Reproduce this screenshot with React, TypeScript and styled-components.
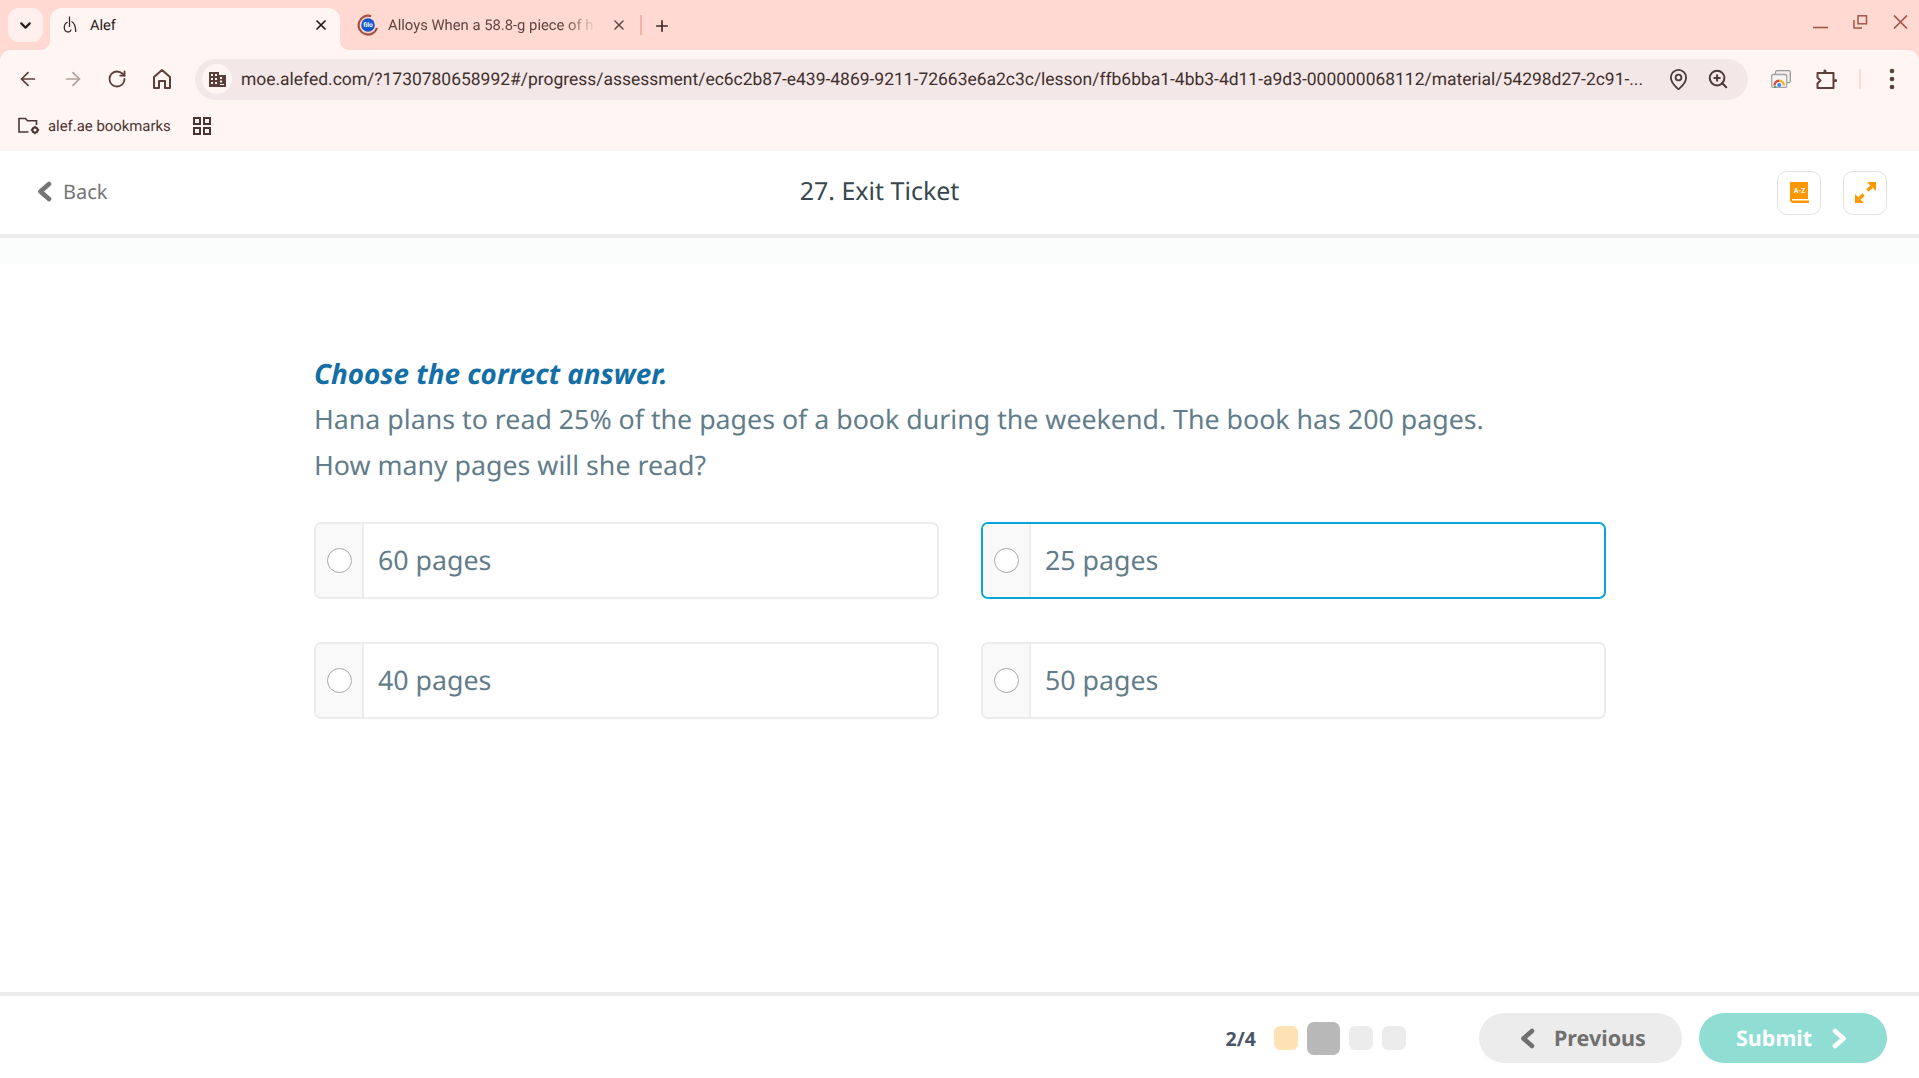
import styled, { createGlobalStyle } from 'styled-components'
import { ArrowLeft, ArrowRight, ChevronDown, MapPin, Plus, RotateCw, X, ZoomIn } from 'lucide-react'

const GlobalStyle = createGlobalStyle`
  html, body { margin: 0; padding: 0; height: 100%; background: #fff; overflow: hidden; }
  body { font-family: 'Roboto', 'Liberation Sans', sans-serif; text-rendering: geometricPrecision; }
  #root { height: 100%; }
`

const Page = styled.div`
  display: flex;
  flex-direction: column;
  width: 1919px;
  height: 1078px;
`

const TabStrip = styled.div`
  display: flex;
  align-items: flex-end;
  height: 50px;
  padding-left: 8px;
  background: #ffd9d2;
  flex: none;
`

const TabMenu = styled.div`
  display: flex;
  align-items: center;
  justify-content: center;
  align-self: flex-start;
  width: 35px;
  height: 34px;
  margin: 8px 7px 0 0;
  border-radius: 11px;
  background: #fff0ed;
  color: #2b1a17;
`

const ActiveTab = styled.div`
  position: relative;
  display: flex;
  align-items: center;
  width: 290px;
  height: 42px;
  padding: 0 11px 8px 13px;
  box-sizing: border-box;
  border-radius: 12px 12px 0 0;
  background: #fff5f3;
  color: #291714;
  font-size: 14.6px;

  &::before,
  &::after {
    content: '';
    position: absolute;
    bottom: 0;
    width: 10px;
    height: 10px;
  }
  &::before {
    left: -10px;
    background: radial-gradient(circle at 0 0, transparent 10px, #fff5f3 10.5px);
  }
  &::after {
    right: -10px;
    background: radial-gradient(circle at 100% 0, transparent 10px, #fff5f3 10.5px);
  }
`

const OtherTab = styled.div`
  display: flex;
  align-items: center;
  width: 298px;
  height: 42px;
  padding: 0 11px 8px 17px;
  box-sizing: border-box;
  color: #5c4742;
  font-size: 14.8px;
`

const TabTitle = styled.span`
  flex: 1;
  margin-left: 13px;
  overflow: hidden;
  white-space: nowrap;
`

const OtherTabTitle = styled(TabTitle)`
  margin-left: 9px;
  -webkit-mask-image: linear-gradient(90deg, #000 85%, transparent);
  mask-image: linear-gradient(90deg, #000 85%, transparent);
`

const OtherTabClose = styled(X)`
  margin-left: 15px;
  flex: none;
`

const TabDivider = styled.div`
  width: 2px;
  height: 20px;
  margin: 0 0 15px 2px;
  background: #f5b3a8;
`

const NewTab = styled.div`
  display: flex;
  margin: 0 0 15px 11px;
  color: #3b2a27;
`

const WindowControls = styled.div`
  display: flex;
  gap: 25px;
  align-self: flex-start;
  margin: 15px 11px 0 auto;
  color: #a3574a;
`

const ToolbarBackdrop = styled.div`
  background: #ffd9d2;
  flex: none;
`

const Toolbar = styled.div`
  display: flex;
  align-items: center;
  height: 58px;
  padding: 0 0 0 16px;
  box-sizing: border-box;
  background: #fff5f3;
  border-radius: 11px 11px 0 0;
`

const NavIcon = styled.div<{ $muted?: boolean }>`
  display: flex;
  justify-content: center;
  width: 24px;
  margin-right: 20.5px;
  color: ${p => (p.$muted ? '#b3a09c' : '#5b3f39')};
`

const Omnibox = styled.div`
  display: flex;
  align-items: center;
  width: 1553px;
  height: 41px;
  margin-left: 1px;
  padding: 0 19px 0 7px;
  box-sizing: border-box;
  border-radius: 21px;
  background: #f3e7e7;
  color: #3f2f2c;
  font-size: 17.47px;
`

const SiteChip = styled.div`
  display: flex;
  align-items: center;
  justify-content: center;
  width: 30px;
  height: 30px;
  margin-right: 9px;
  border-radius: 50%;
  background: #fff5f3;
  color: #5b3f39;
  flex: none;
`

const UrlText = styled.span`
  flex: 1;
  padding-top: 2px;
  white-space: nowrap;
  overflow: hidden;
`

const OmniIcons = styled.div`
  display: flex;
  align-items: center;
  gap: 17px;
  margin-left: 20px;
  color: #4b3c39;
`

const ToolbarRight = styled.div`
  display: flex;
  align-items: center;
  margin-left: 23px;
  color: #5b3f39;
`

const ExtensionSlot = styled.div`
  display: flex;
  margin-left: 25px;
`

const ToolbarDivider = styled.div`
  width: 2px;
  height: 20px;
  margin: 0 28px 0 21px;
  background: #ffd9d2;
`

const BookmarksBar = styled.div`
  display: flex;
  align-items: center;
  height: 43px;
  padding: 0 0 8px 18px;
  box-sizing: border-box;
  background: #fff5f3;
  color: #4b3431;
  font-size: 14.9px;
  flex: none;
`

const BookmarkLabel = styled.span`
  margin: 0 22px 0 8px;
`

const AppHeader = styled.header`
  position: relative;
  display: flex;
  align-items: center;
  justify-content: space-between;
  height: 87px;
  padding: 0 32px 0 37px;
  box-sizing: border-box;
  border-bottom: 4px solid #ececec;
  flex: none;
`

const BackLink = styled.div`
  display: flex;
  align-items: center;
  gap: 11px;
  margin-bottom: 2px;
  color: #757575;
  font-family: 'Noto Sans', sans-serif;
  font-size: 20px;
`

const PageTitle = styled.h1`
  position: absolute;
  left: 0;
  right: 160px;
  margin: 0 0 3px;
  text-align: center;
  color: #37474f;
  font-family: 'Noto Sans', sans-serif;
  font-size: 25px;
  font-weight: 400;
`

const HeaderActions = styled.div`
  display: flex;
  gap: 22px;
`

const IconButton = styled.div`
  display: flex;
  align-items: center;
  justify-content: center;
  width: 44px;
  height: 44px;
  box-sizing: border-box;
  border: 1px solid #e2e2e2;
  border-radius: 10px;
`

const Content = styled.main`
  flex: 1;
  padding: 118px 0 0 314px;
  box-sizing: border-box;
  background: linear-gradient(#fbfdfc 26px, #fff 26px);
  font-family: 'Noto Sans', sans-serif;
`

const Prompt = styled.div`
  color: #136fa5;
  font-size: 27.8px;
  font-style: italic;
  font-weight: 700;
  line-height: 36px;
`

const Question = styled.p`
  margin: 4px 0 34px;
  color: #627d8a;
  font-size: 26.75px;
  line-height: 46px;
`

const Options = styled.div`
  display: grid;
  grid-template-columns: 625px 625px;
  gap: 43px 42px;
`

const Option = styled.div<{ $selected?: boolean }>`
  display: flex;
  height: 77px;
  box-sizing: border-box;
  border: 2px solid ${p => (p.$selected ? '#0aa5d8' : '#ececec')};
  border-radius: 7px;
  overflow: hidden;
`

const RadioCell = styled.div`
  display: flex;
  align-items: center;
  justify-content: center;
  width: 46px;
  border-right: 2px solid #ececec;
  background: #f9f9f9;
  flex: none;
`

const Radio = styled.div`
  width: 25px;
  height: 25px;
  box-sizing: border-box;
  border: 1px solid #a9a9a9;
  border-radius: 50%;
  background: #fff;
`

const OptionLabel = styled.div`
  display: flex;
  align-items: center;
  padding: 0 0 2px 14px;
  color: #627d8a;
  font-size: 26.75px;
`

const Footer = styled.footer`
  display: flex;
  align-items: center;
  justify-content: flex-end;
  height: 86px;
  padding: 2px 32px 0 0;
  box-sizing: border-box;
  border-top: 4px solid #ececec;
  font-family: 'Noto Sans', sans-serif;
  flex: none;
`

const PageCount = styled.span`
  margin-right: 18px;
  color: #4a5568;
  font-size: 19.5px;
  font-weight: 700;
`

const Dots = styled.div`
  display: flex;
  align-items: center;
  gap: 9px;
  margin-right: 73px;
`

const Dot = styled.div<{ $color: string; $big?: boolean }>`
  width: ${p => (p.$big ? '33px' : '24px')};
  height: ${p => (p.$big ? '33px' : '24px')};
  border-radius: ${p => (p.$big ? '7px' : '6px')};
  background: ${p => p.$color};
`

const PillButton = styled.div<{ $submit?: boolean }>`
  display: flex;
  align-items: center;
  gap: ${p => (p.$submit ? '20px' : '19px')};
  width: ${p => (p.$submit ? '188px' : '203px')};
  height: 50px;
  margin-left: ${p => (p.$submit ? '17px' : '0')};
  padding-left: ${p => (p.$submit ? '37px' : '41px')};
  box-sizing: border-box;
  border-radius: 25px;
  background: ${p => (p.$submit ? '#90ddd3' : '#ececec')};
  color: ${p => (p.$submit ? '#fff' : '#707070')};
  font-size: 21.5px;
  font-weight: 700;
`

function AlefFavicon() {
  return (
    <svg width="14" height="18" viewBox="0 0 14 18" fill="none" stroke="#3b2a27" strokeWidth="1.3">
      <path d="M6.5 0.5v10.5M4.5 6C2 7.5 1 9.5 1.3 12c.3 2.5 2.2 4 4 4 1.5 0 2.5-1 2.7-2.5" />
      <path d="M8.5 5.5c3 1.5 4.3 5 4.2 10.5" />
    </svg>
  )
}

function FiloFavicon() {
  return (
    <svg width="22" height="22" viewBox="0 0 22 22" fill="none">
      <path d="M14 2.2A9.4 9.4 0 1 0 20 14" stroke="#a5503f" strokeWidth="2.2" />
      <circle cx="11" cy="11" r="6.8" fill="#1457c9" />
      <text x="11" y="13.3" fontSize="6.6" fontWeight="700" fontFamily="Roboto" fill="#fff" textAnchor="middle">filo</text>
    </svg>
  )
}

function BuildingIcon() {
  return (
    <svg width="17" height="15" viewBox="0 0 17 15" fill="currentColor">
      <path fillRule="evenodd" d="M0 0h10v3h7v12H0V0zm2 2v2h2V2H2zm4 0v2h2V2H6zM2 6v2h2V6H2zm4 0v2h2V6H6zm-4 4v2h2v-2H2zm4 0v2h2v-2H6zm5-5v2h2V5h-2zm0 3.500v2h2v-2h-2zm0 3.500v1h4v-1h-4z" />
    </svg>
  )
}

function HomeIcon() {
  return (
    <svg width="20" height="22" viewBox="0 0 20 22" fill="none" stroke="currentColor" strokeWidth="2" strokeLinejoin="round">
      <path d="M2 20V9l8-7 8 7v11h-5v-7H7v7z" />
    </svg>
  )
}

function FolderGearIcon() {
  return (
    <svg width="22" height="18" viewBox="0 0 22 18" fill="none" stroke="currentColor" strokeWidth="1.6">
      <path d="M10.500 15H1V1.500h6.500l2 2.300h9V8" />
      <circle cx="17" cy="13" r="2.6" strokeWidth="2" />
      <path d="M17 8.800v1.500M17 15.700v1.500M12.800 13h1.500M19.700 13h1.500" strokeWidth="1.500" />
    </svg>
  )
}

function AppsIcon() {
  return (
    <svg width="18" height="18" viewBox="0 0 18 18" fill="none" stroke="currentColor" strokeWidth="2">
      <rect x="1" y="1" width="6" height="6" />
      <rect x="11" y="1" width="6" height="6" />
      <rect x="1" y="11" width="6" height="6" />
      <rect x="11" y="11" width="6" height="6" />
    </svg>
  )
}

function CastIcon() {
  return (
    <svg width="20" height="18" viewBox="0 0 20 18" fill="none">
      <rect x="4.500" y="0.700" width="14.800" height="12" rx="1.500" fill="#f4eeee" stroke="#9a9a9a" strokeWidth="1.300" />
      <rect x="0.700" y="4.500" width="15" height="13" rx="1.500" fill="#f6f3f3" stroke="#a5a5a5" strokeWidth="1.300" />
      <path d="M3.500 15.500a4.700 4.700 0 0 1 4.700-4.700" stroke="#d8483e" strokeWidth="2.400" />
      <path d="M8.200 10.800a4.700 4.700 0 0 1 4.700 4.700" stroke="#e9b62e" strokeWidth="2.400" />
      <path d="M3 17h2.400" stroke="#43a257" strokeWidth="1.600" />
      <circle cx="8.200" cy="15" r="2" fill="#4285f4" />
    </svg>
  )
}

function PuzzleIcon() {
  return (
    <svg width="22" height="20" viewBox="0 0 22 20" fill="currentColor" stroke="currentColor" strokeWidth="2" strokeLinejoin="round">
      <path fill="none" d="M1.500 4H17.500V19H1.500V14.500L4.500 11.500L1.500 8.500Z" />
      <circle cx="9" cy="2" r="1" strokeWidth="1.200" />
      <circle cx="19.500" cy="11.500" r="1" strokeWidth="1.200" />
    </svg>
  )
}

function KebabIcon() {
  return (
    <svg width="6" height="22" viewBox="0 0 6 22" fill="currentColor">
      <circle cx="3" cy="3" r="2.300" />
      <circle cx="3" cy="11" r="2.300" />
      <circle cx="3" cy="19" r="2.300" />
    </svg>
  )
}

function MinimizeIcon() {
  return (
    <svg width="15" height="14" viewBox="0 0 15 14" stroke="currentColor" strokeWidth="1.600">
      <path d="M0 12.500h15" />
    </svg>
  )
}

function RestoreIcon() {
  return (
    <svg width="15" height="14" viewBox="0 0 15 14" fill="none" stroke="currentColor" strokeWidth="1.500">
      <rect x="5" y="0.800" width="8.500" height="8" />
      <path d="M1 5v8h8" />
    </svg>
  )
}

function CloseIcon() {
  return (
    <svg width="15" height="14" viewBox="0 0 15 14" stroke="currentColor" strokeWidth="1.700">
      <path d="M1 0.500l13 13M14 0.500l-13 13" />
    </svg>
  )
}

function GlossaryIcon() {
  return (
    <svg width="19" height="21" viewBox="0 0 19 21">
      <path d="M0 1a1 1 0 0 1 1-1h17v17H2v1.500h17V21H2l-2-2z" fill="#ff9800" />
      <text x="9.500" y="11" fontSize="7" fontWeight="700" fontFamily="Roboto" fill="#fff" textAnchor="middle">A-Z</text>
    </svg>
  )
}

function ExpandIcon() {
  return (
    <svg width="21" height="21" viewBox="0 0 21 21" fill="#ff9800">
      <path d="M12 0h9v9zM0 12l9 9H0z" />
      <path d="M4.500 16.500l4-4M12.500 8.500l4-4" stroke="#ff9800" strokeWidth="3.400" />
    </svg>
  )
}

function Chevron({ right, color }: { right?: boolean; color: string }) {
  return (
    <svg width="15" height="21" viewBox="0 0 15 21" fill="none" stroke={color} strokeWidth="4.600" strokeLinecap="round" strokeLinejoin="round">
      <path d={right ? 'M3 3l8.500 7.500L3 18' : 'M12 3L3.500 10.500 12 18'} />
    </svg>
  )
}

const answers = [
  { label: '60 pages' },
  { label: '25 pages', selected: true },
  { label: '40 pages' },
  { label: '50 pages' },
]

export default function App() {
  return (
    <Page>
      <GlobalStyle />
      <TabStrip>
        <TabMenu>
          <ChevronDown size={17} strokeWidth={3} />
        </TabMenu>
        <ActiveTab>
          <AlefFavicon />
          <TabTitle>Alef</TabTitle>
          <X size={16} strokeWidth={2.6} />
        </ActiveTab>
        <OtherTab>
          <FiloFavicon />
          <OtherTabTitle>Alloys When a 58.8-g piece of h</OtherTabTitle>
          <OtherTabClose size={16} strokeWidth={2.2} />
        </OtherTab>
        <TabDivider />
        <NewTab>
          <Plus size={18} strokeWidth={2.2} />
        </NewTab>
        <WindowControls>
          <MinimizeIcon />
          <RestoreIcon />
          <CloseIcon />
        </WindowControls>
      </TabStrip>
      <ToolbarBackdrop>
        <Toolbar>
          <NavIcon><ArrowLeft size={22} strokeWidth={1.9} /></NavIcon>
          <NavIcon $muted><ArrowRight size={22} strokeWidth={1.9} /></NavIcon>
          <NavIcon><RotateCw size={20} strokeWidth={2.2} /></NavIcon>
          <NavIcon><HomeIcon /></NavIcon>
          <Omnibox>
            <SiteChip><BuildingIcon /></SiteChip>
            <UrlText>moe.alefed.com/?1730780658992#/progress/assessment/ec6c2b87-e439-4869-9211-72663e6a2c3c/lesson/ffb6bba1-4bb3-4d11-a9d3-000000068112/material/54298d27-2c91-...</UrlText>
            <OmniIcons>
              <MapPin size={23} strokeWidth={1.9} />
              <ZoomIn size={22} strokeWidth={2.2} />
            </OmniIcons>
          </Omnibox>
          <ToolbarRight>
            <CastIcon />
            <ExtensionSlot><PuzzleIcon /></ExtensionSlot>
            <ToolbarDivider />
            <KebabIcon />
          </ToolbarRight>
        </Toolbar>
      </ToolbarBackdrop>
      <BookmarksBar>
        <FolderGearIcon />
        <BookmarkLabel>alef.ae bookmarks</BookmarkLabel>
        <AppsIcon />
      </BookmarksBar>
      <AppHeader>
        <BackLink>
          <Chevron color="#757575" />
          Back
        </BackLink>
        <PageTitle>27. Exit Ticket</PageTitle>
        <HeaderActions>
          <IconButton><GlossaryIcon /></IconButton>
          <IconButton><ExpandIcon /></IconButton>
        </HeaderActions>
      </AppHeader>
      <Content>
        <Prompt>Choose the correct answer.</Prompt>
        <Question>
          Hana plans to read 25% of the pages of a book during the weekend. The book has 200 pages.
          <br />
          How many pages will she read?
        </Question>
        <Options>
          {answers.map(a => (
            <Option key={a.label} $selected={a.selected}>
              <RadioCell><Radio /></RadioCell>
              <OptionLabel>{a.label}</OptionLabel>
            </Option>
          ))}
        </Options>
      </Content>
      <Footer>
        <PageCount>2/4</PageCount>
        <Dots>
          <Dot $color="#ffe2b3" />
          <Dot $color="#b8b8b8" $big />
          <Dot $color="#ececec" />
          <Dot $color="#ececec" />
        </Dots>
        <PillButton>
          <Chevron color="#707070" />
          Previous
        </PillButton>
        <PillButton $submit>
          Submit
          <Chevron right color="#fff" />
        </PillButton>
      </Footer>
    </Page>
  )
}
